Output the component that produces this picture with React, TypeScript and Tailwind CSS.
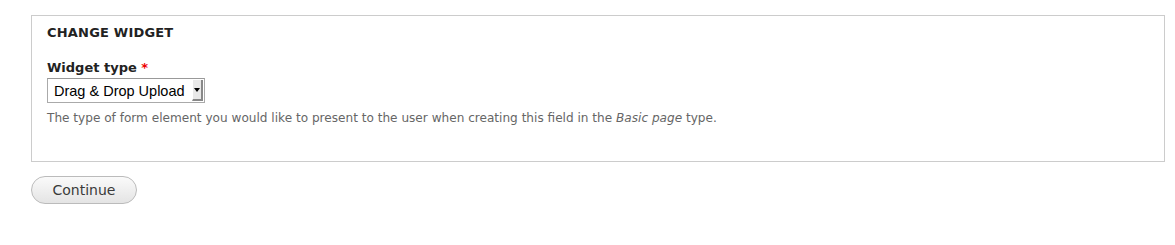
export default function App() {
  return (
    <div className="min-h-[245px] bg-white pt-[15px] pl-[31px] pr-[10px] font-['DejaVu_Sans',sans-serif] text-[#333]">
      {/* Change widget fieldset */}
      <fieldset className="border border-[#ccc] h-[147px] px-[15px] pt-[9px]">
        <h2 className="text-[13px] font-bold uppercase tracking-[0.2px] text-[#222] leading-[16px]">
          Change widget
        </h2>
        <div className="mt-[19px]">
          <label className="block text-[13px] font-bold text-[#222] leading-[16px]">
            Widget type <span className="text-[#e00]">*</span>
          </label>
          <div className="mt-[2px] flex w-[158px] h-[25px] border border-[#aaa] border-t-[#999] bg-white">
            <span className="flex-1 pl-[6px] pt-[3px] text-[14.5px] leading-[18px] text-black font-['Liberation_Sans',Arial,sans-serif] whitespace-nowrap">
              Drag &amp; Drop Upload
            </span>
            <span className="w-[11px] my-[1px] mr-[1px] flex items-center justify-center bg-[#e8e8e8] border-l border-[#fff] border-r-2 border-b-2 border-r-[#888] border-b-[#888]">
              <span className="block w-0 h-0 border-l-[3px] border-r-[3px] border-t-[4px] border-l-transparent border-r-transparent border-t-black" />
            </span>
          </div>
          <p className="mt-[7px] text-[12.1px] leading-[16px] text-[#666]">
            The type of form element you would like to present to the user when creating this field in the <em>Basic page</em> type.
          </p>
        </div>
      </fieldset>

      <button className="mt-[14px] h-[28px] w-[106px] rounded-full border border-[#bbb] bg-gradient-to-b from-[#fafafa] to-[#e4e4e4] text-[14px] text-[#3a3a3a] leading-none">
        Continue
      </button>
    </div>
  );
}
